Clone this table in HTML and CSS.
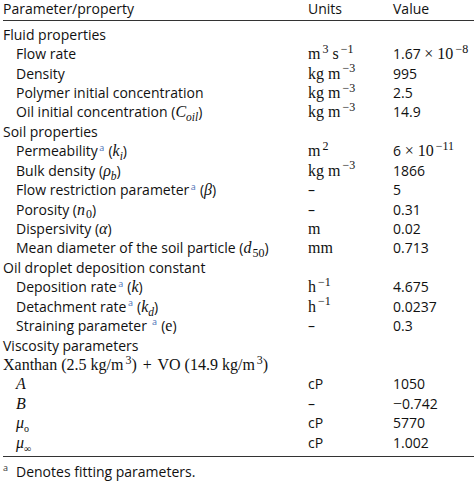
FILE: index.html
```html
<!DOCTYPE html>
<html>
<head>
<meta charset="utf-8">
<link rel="stylesheet" href="styles.css">
</head>
<body>
<div class="wrap">
  <div class="head">
    <div>Parameter/property</div><div>Units</div><div>Value</div>
  </div>
  <div class="body">
    <div>Fluid properties</div><div></div><div></div>
    <div class="ind">Flow rate</div><div class="m">m<sup>3</sup> s<sup>−1</sup></div><div>1.67 <span class="m">× 10<sup>−8</sup></span></div>
    <div class="ind">Density</div><div class="m">kg m<sup>−3</sup></div><div>995</div>
    <div class="ind">Polymer initial concentration</div><div class="m">kg m<sup>−3</sup></div><div>2.5</div>
    <div class="ind">Oil initial concentration (<i class="v">C<sub>oil</sub></i>)</div><div class="m">kg m<sup>−3</sup></div><div>14.9</div>
    <div>Soil properties</div><div></div><div></div>
    <div class="ind">Permeability<sup class="fn">a</sup> (<i class="v">k<sub>i</sub></i>)</div><div class="m">m<sup>2</sup></div><div>6 <span class="m">× 10<sup>−11</sup></span></div>
    <div class="ind">Bulk density (<i class="v">ρ<sub>b</sub></i>)</div><div class="m">kg m<sup>−3</sup></div><div>1866</div>
    <div class="ind">Flow restriction parameter<sup class="fn">a</sup> (<i class="v">β</i>)</div><div>–</div><div>5</div>
    <div class="ind">Porosity (<i class="v">n</i><sub class="up">0</sub>)</div><div>–</div><div>0.31</div>
    <div class="ind">Dispersivity (<i class="v">α</i>)</div><div class="m">m</div><div>0.02</div>
    <div class="ind">Mean diameter of the soil particle (<i class="v">d</i><sub class="up">50</sub>)</div><div class="m">mm</div><div>0.713</div>
    <div>Oil droplet deposition constant</div><div></div><div></div>
    <div class="ind">Deposition rate<sup class="fn">a</sup> (<i class="v">k</i>)</div><div class="m">h<sup>−1</sup></div><div>4.675</div>
    <div class="ind">Detachment rate<sup class="fn">a</sup> (<i class="v">k<sub>d</sub></i>)</div><div class="m">h<sup>−1</sup></div><div>0.0237</div>
    <div class="ind">Straining parameter <sup class="fn">a</sup> (<span class="m">e</span>)</div><div>–</div><div>0.3</div>
    <div>Viscosity parameters</div><div></div><div></div>
    <div class="m span">Xanthan (2.5 kg/m<sup>3</sup>) <span class="op">+</span> VO (14.9 kg/m<sup>3</sup>)</div>
    <div class="ind"><i class="v">A</i></div><div>cP</div><div>1050</div>
    <div class="ind"><i class="v">B</i></div><div>–</div><div><span class="m">−</span>0.742</div>
    <div class="ind"><i class="v">μ</i><sub class="mu">o</sub></div><div>cP</div><div>5770</div>
    <div class="ind"><i class="v">μ</i><sub class="mu">∞</sub></div><div>cP</div><div>1.002</div>
  </div>
  <div class="note"><sup class="nfn">a</sup><span class="ntext">Denotes fitting parameters.</span></div>
</div>
</body>
</html>
```
FILE: styles.css
```css
html, body {
  margin: 0;
  padding: 0;
  background: #ffffff;
}
body {
  font-family: "Open Sans", "Noto Sans", sans-serif;
  font-size: 14px;
  color: #111111;
}
.wrap {
  padding-left: 3px;
  width: 471px;
}
.head, .body {
  display: grid;
  grid-template-columns: 305px 85px 1fr;
}
.head {
  height: 20px;
  grid-template-rows: 18px;
  line-height: 18px;
  border-bottom: 1.5px solid #333;
}
.body {
  grid-auto-rows: 19.43px;
  line-height: 19.43px;
  padding-top: 3.8px;
  padding-bottom: 4px;
  border-bottom: 1.5px solid #333;
}
.head > div, .body > div {
  white-space: nowrap;
}
.span { grid-column: 1 / -1; }
.ind { padding-left: 13px; }
.m {
  font-family: "Liberation Serif", "Times New Roman", serif;
  font-size: 16px;
}
.v {
  font-family: "Liberation Serif", "Times New Roman", serif;
  font-style: italic;
  font-size: 16px;
}
sup, sub {
  font-size: 0.72em;
  line-height: 0;
}
.m sup {
  margin-left: 2px;
  font-size: 0.75em;
}
.op { margin: 0 2px; }
.up {
  font-family: "Liberation Serif", serif;
  font-size: 12px;
  margin-left: 1px;
}
.mu {
  font-family: "Liberation Serif", serif;
  font-size: 10px;
}
.fn {
  color: #4a6fb5;
  font-size: 0.64em;
  margin-left: 1.5px;
  margin-right: 0.5px;
}
.note {
  margin-top: 5.7px;
  line-height: 18px;
}
.nfn {
  display: inline-block;
  width: 13px;
  font-size: 0.64em;
  color: #333;
}
```
